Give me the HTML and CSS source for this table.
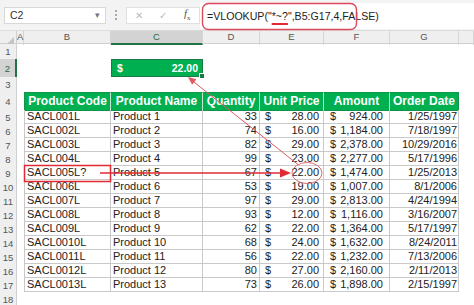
FILE: index.html
```html
<!DOCTYPE html>
<html>
<head>
<meta charset="utf-8">
<link rel="stylesheet" href="styles.css">
</head>
<body>
<div class="fbar">
  <div class="namebox"><span>C2</span><span class="dd">&#9662;</span></div>
  <div class="grip"></div>
  <div class="btns"><span class="bx">&#10005;</span><span class="bc">&#10003;</span><span class="bf"><i>f</i><sub>x</sub></span></div>
  <div class="finput">=VLOOKUP("<span class="u">*~?</span>",B5:G17,4,FALSE)</div>
</div>
<div class="sheet">
  <div class="row hd">
    <div class="corner"><span class="tri"></span></div>
    <div class="ch">A</div><div class="ch">B</div><div class="ch csel">C</div><div class="ch">D</div><div class="ch">E</div><div class="ch">F</div><div class="ch">G</div><div class="ch"></div>
  </div>
  <div class="row h15"><div class="rh">1</div></div>
  <div class="row h18"><div class="rh rsel">2</div><div></div><div></div><div class="selcell"><span>$</span><span>22.00</span><i class="handle"></i></div></div>
  <div class="row h15"><div class="rh">3</div></div>
  <div class="row h18 th">
    <div class="rh">4</div><div></div>
    <div class="t first">Product Code</div><div class="t">Product Name</div><div class="t">Quantity</div><div class="t">Unit Price</div><div class="t">Amount</div><div class="t">Order Date</div>
  </div>
  <div class="row d"><div class="rh">5</div><div></div><div class="c first">SACL001L</div><div class="c">Product 1</div><div class="c n">33</div><div class="c m"><span>$</span><span>28.00</span></div><div class="c m2"><span>$</span><span>924.00</span></div><div class="c n dt">1/25/1997</div></div>
  <div class="row d"><div class="rh">6</div><div></div><div class="c first">SACL002L</div><div class="c">Product 2</div><div class="c n">74</div><div class="c m"><span>$</span><span>16.00</span></div><div class="c m2"><span>$</span><span>1,184.00</span></div><div class="c n dt">7/18/1997</div></div>
  <div class="row d"><div class="rh">7</div><div></div><div class="c first">SACL003L</div><div class="c">Product 3</div><div class="c n">82</div><div class="c m"><span>$</span><span>29.00</span></div><div class="c m2"><span>$</span><span>2,378.00</span></div><div class="c n dt">10/29/2016</div></div>
  <div class="row d"><div class="rh">8</div><div></div><div class="c first">SACL004L</div><div class="c">Product 4</div><div class="c n">99</div><div class="c m"><span>$</span><span>23.00</span></div><div class="c m2"><span>$</span><span>2,277.00</span></div><div class="c n dt">5/17/1996</div></div>
  <div class="row d"><div class="rh">9</div><div></div><div class="c first">SACL005L?</div><div class="c">Product 5</div><div class="c n">67</div><div class="c m"><span>$</span><span>22.00</span></div><div class="c m2"><span>$</span><span>1,474.00</span></div><div class="c n dt">1/25/2013</div></div>
  <div class="row d"><div class="rh">10</div><div></div><div class="c first">SACL006L</div><div class="c">Product 6</div><div class="c n">53</div><div class="c m"><span>$</span><span>19.00</span></div><div class="c m2"><span>$</span><span>1,007.00</span></div><div class="c n dt">8/1/2006</div></div>
  <div class="row d"><div class="rh">11</div><div></div><div class="c first">SACL007L</div><div class="c">Product 7</div><div class="c n">97</div><div class="c m"><span>$</span><span>29.00</span></div><div class="c m2"><span>$</span><span>2,813.00</span></div><div class="c n dt">4/24/1994</div></div>
  <div class="row d"><div class="rh">12</div><div></div><div class="c first">SACL008L</div><div class="c">Product 8</div><div class="c n">93</div><div class="c m"><span>$</span><span>12.00</span></div><div class="c m2"><span>$</span><span>1,116.00</span></div><div class="c n dt">3/16/2007</div></div>
  <div class="row d"><div class="rh">13</div><div></div><div class="c first">SACL009L</div><div class="c">Product 9</div><div class="c n">62</div><div class="c m"><span>$</span><span>22.00</span></div><div class="c m2"><span>$</span><span>1,364.00</span></div><div class="c n dt">5/17/1997</div></div>
  <div class="row d"><div class="rh">14</div><div></div><div class="c first">SACL0010L</div><div class="c">Product 10</div><div class="c n">68</div><div class="c m"><span>$</span><span>24.00</span></div><div class="c m2"><span>$</span><span>1,632.00</span></div><div class="c n dt">8/24/2011</div></div>
  <div class="row d"><div class="rh">15</div><div></div><div class="c first">SACL0011L</div><div class="c">Product 11</div><div class="c n">56</div><div class="c m"><span>$</span><span>22.00</span></div><div class="c m2"><span>$</span><span>1,232.00</span></div><div class="c n dt">7/13/2006</div></div>
  <div class="row d"><div class="rh">16</div><div></div><div class="c first">SACL0012L</div><div class="c">Product 12</div><div class="c n">80</div><div class="c m"><span>$</span><span>27.00</span></div><div class="c m2"><span>$</span><span>2,160.00</span></div><div class="c n dt">2/11/2013</div></div>
  <div class="row d"><div class="rh">17</div><div></div><div class="c first">SACL0013L</div><div class="c">Product 13</div><div class="c n">73</div><div class="c m"><span>$</span><span>26.00</span></div><div class="c m2"><span>$</span><span>1,898.00</span></div><div class="c n dt">2/15/1997</div></div>
  <div class="row h14"><div class="rh">18</div></div>
</div>
<svg class="notes" width="474" height="305" viewBox="0 0 474 305">
  <rect x="202.5" y="3.5" width="154" height="26" rx="6" fill="none" stroke="#dd4a5a" stroke-width="1.4"/>
  <rect x="24.5" y="165.5" width="86" height="16" fill="none" stroke="#e12a33" stroke-width="1.5"/>
  <line x1="100" y1="173" x2="283" y2="173" stroke="#e12a33" stroke-width="1.5"/>
  <polygon points="291,173 280,168.5 280,177.5" fill="#e12a33"/>
  <ellipse cx="307" cy="173" rx="15" ry="10.5" fill="none" stroke="#e06a70" stroke-width="1"/>
  <line x1="298" y1="164.5" x2="192" y2="80.5" stroke="#e05a60" stroke-width="1"/>
  <polygon points="188,77 196.4,79.3 192.1,84.7" fill="#e05a60"/>
</svg>
</body>
</html>
```
FILE: styles.css
```css
html, body {
  margin: 0;
  padding: 0;
}
body {
  width: 474px;
  height: 305px;
  overflow: hidden;
  background: #fff;
  position: relative;
  font-family: "Liberation Sans Narrow", "Liberation Sans", Arial, sans-serif;
  color: #222;
}

/* formula bar */
.fbar {
  height: 31px;
  background: #f3f3f3;
  display: flex;
  align-items: center;
  box-sizing: border-box;
  border-bottom: 1px solid #dcdcdc;
}
.namebox {
  margin-left: 4px;
  width: 102px;
  height: 17px;
  box-sizing: border-box;
  background: #fff;
  border: 1px solid #d8d8d8;
  display: flex;
  align-items: center;
  justify-content: space-between;
  padding: 0 5px 0 5px;
  font-family: "Liberation Sans", Arial, sans-serif;
  font-size: 10.5px;
  color: #333;
}
.namebox .dd {
  font-size: 9px;
  color: #777;
}
.grip {
  width: 2px;
  height: 10px;
  margin: 0 9px 0 9px;
  background: repeating-linear-gradient(#aaa 0 2px, transparent 2px 4px);
}
.btns {
  width: 74px;
  height: 17px;
  box-sizing: border-box;
  background: #fff;
  border: 1px solid #e0e0e0;
  display: flex;
  align-items: center;
  font-family: "Liberation Sans", Arial, sans-serif;
}
.btns .bx {
  margin-left: 8px;
  font-size: 10px;
  color: #bbb;
}
.btns .bc {
  margin-left: 16px;
  font-size: 10px;
  color: #bbb;
}
.btns .bf {
  margin-left: 17px;
  font-family: "Liberation Serif", serif;
  font-size: 11px;
  color: #555;
}
.btns .bf sub {
  font-size: 7px;
}
.finput {
  flex: 1;
  align-self: stretch;
  margin: 3px 0 1px 0;
  background: #fff;
  display: flex;
  align-items: center;
  padding-left: 7px;
  font-family: "Liberation Sans Narrow", "Liberation Sans", Arial, sans-serif;
  font-size: 10.6px;
  color: #222;
}
.finput .u {
  text-decoration: underline;
  text-decoration-color: #e12a33;
  text-decoration-thickness: 1.5px;
  text-underline-offset: 3px;
}

/* sheet grid */
.row {
  display: grid;
  grid-template-columns: 17px 7px 87px 92px 57px 64px 66px 69px 15px;
}
.row > div {
  box-sizing: border-box;
  min-width: 0;
  white-space: nowrap;
  overflow: visible;
}
.hd { height: 13px; background: #efefef; border-bottom: 1px solid #cfcfcf; box-sizing: border-box; }
.h14 { height: 14px; }
.h15 { height: 15px; }
.h18 { height: 18px; }
.d { height: 14px; }

.corner {
  position: relative;
  border-right: 1px solid #d0d0d0;
}
.tri {
  position: absolute;
  right: 2px;
  bottom: 1px;
  width: 0;
  height: 0;
  border-left: 7px solid transparent;
  border-bottom: 7px solid #c4c4c4;
}
.ch {
  font-family: "Liberation Sans", Arial, sans-serif;
  font-size: 9.5px;
  color: #555;
  text-align: center;
  line-height: 12px;
  border-right: 1px solid #d6d6d6;
}
.csel {
  background: #d3d3d3;
  color: #2b6b45;
  border-bottom: 2px solid #217346;
}
.rh {
  background: #efefef;
  border-right: 1px solid #cfcfcf;
  font-family: "Liberation Sans", Arial, sans-serif;
  font-size: 9.5px;
  color: #555;
  text-align: center;
  display: flex;
  align-items: center;
  justify-content: center;
}
.rsel {
  background: #d3d3d3;
  color: #2b6b45;
  border-right: 2px solid #217346;
}

.selcell {
  position: relative;
  background: #00b050;
  border: 1px solid #1d7a44;
  color: #fff;
  font-family: "Liberation Sans", Arial, sans-serif;
  font-weight: bold;
  font-size: 10.5px;
  display: flex;
  align-items: center;
  justify-content: space-between;
  padding: 0 4px 0 5px;
}
.handle {
  position: absolute;
  right: -3px;
  bottom: -3px;
  width: 4px;
  height: 4px;
  background: #1d7a44;
  border: 1px solid #fff;
}

/* table header */
.th .t {
  background: #00b050;
  color: #fff;
  font-family: "Liberation Sans", Arial, sans-serif;
  font-weight: bold;
  font-size: 12px;
  text-align: center;
  line-height: 17px;
  border-right: 1px solid #bfe9cf;
  border-top: 1px solid #119448;
  border-bottom: 1px solid #119448;
}
.th .t:last-child { border-right: 1px solid #119448; }
.th .first { border-left: 1px solid #119448; }

/* data cells */
.c {
  font-size: 11px;
  line-height: 13px;
  padding-left: 2px;
  border-right: 1px solid #c9c9c9;
  border-bottom: 1px solid #c9c9c9;
  color: #222;
}
.c.first { border-left: 1px solid #c9c9c9; padding-left: 2px; }
.c.n { text-align: right; padding-right: 2px; }
.c.dt { padding-right: 1px; }
.c.m, .c.m2 {
  display: flex;
  justify-content: space-between;
  padding-left: 5px;
  padding-right: 4px;
}
.c.m2 { padding-left: 6px; padding-right: 6px; }

.notes {
  position: absolute;
  left: 0;
  top: 0;
  pointer-events: none;
}
```
